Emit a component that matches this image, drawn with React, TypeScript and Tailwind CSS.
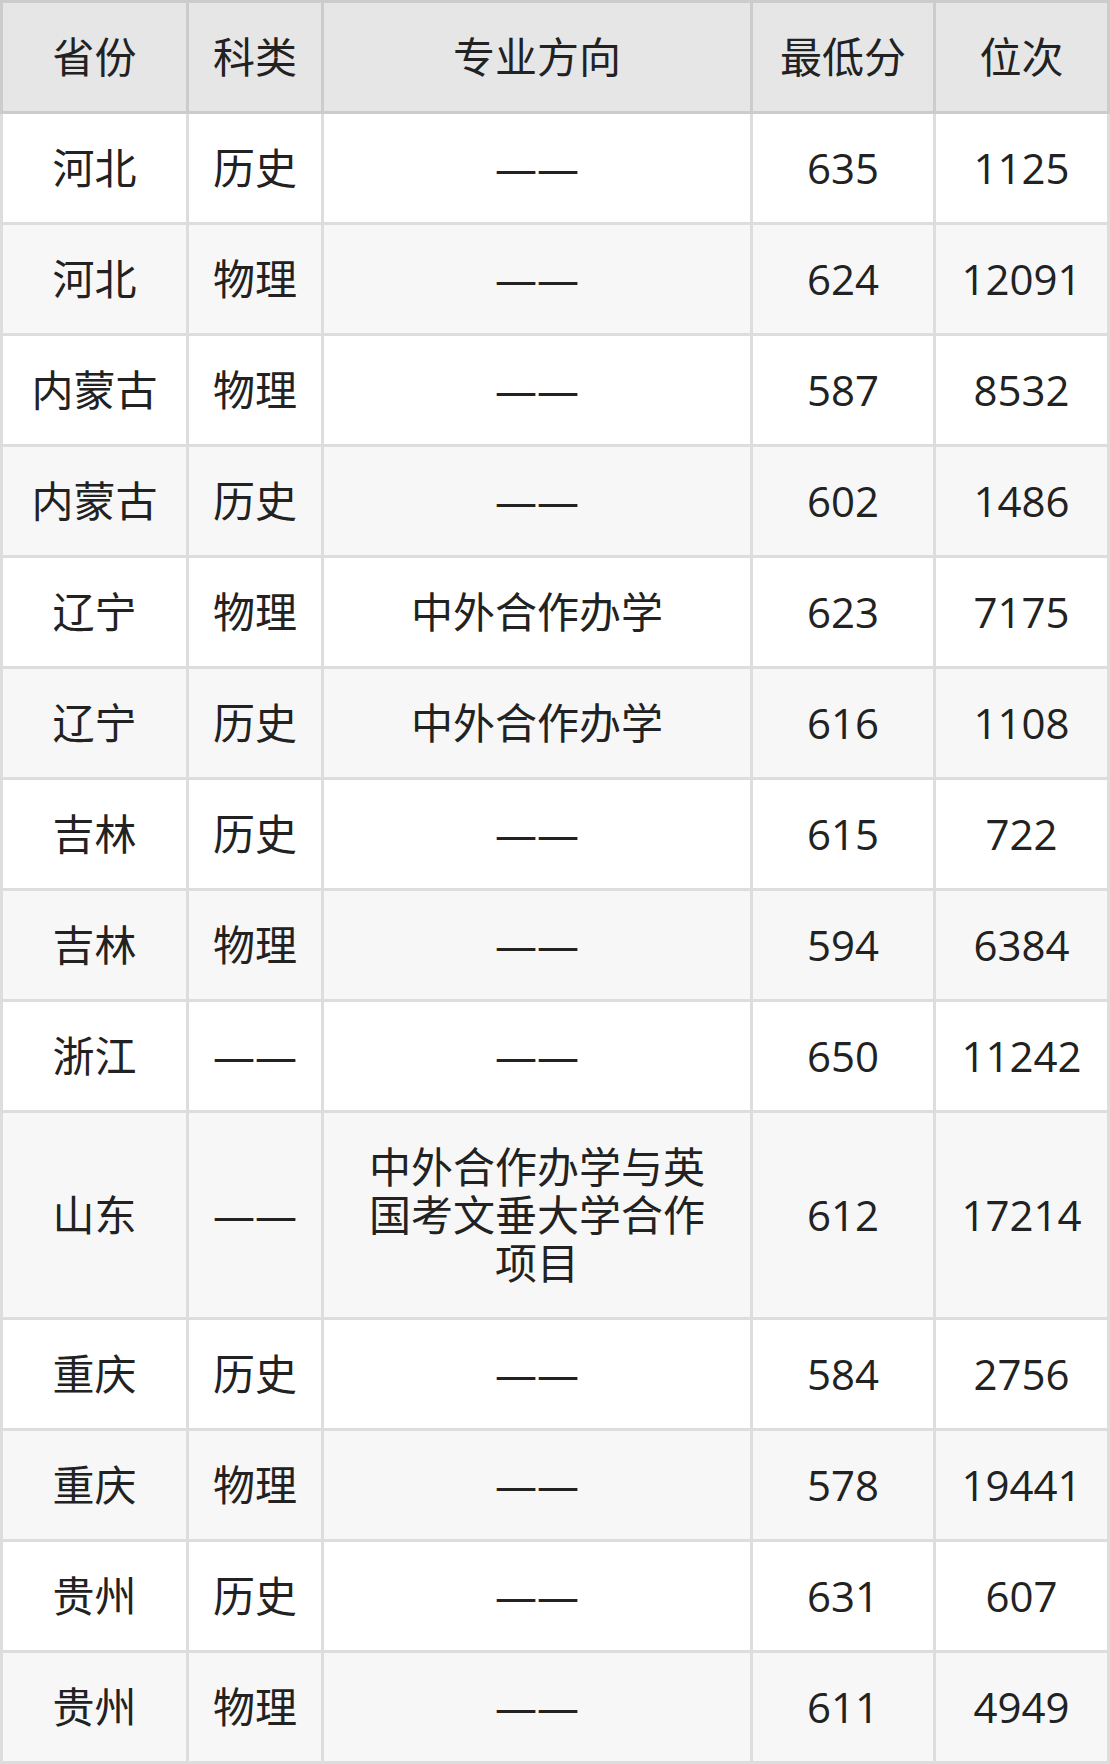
type Row = {
  province: string;
  subject: string;
  major: string;
  score: string;
  rank: string;
};

const rows: Row[] = [
  { province: "河北", subject: "历史", major: "——", score: "635", rank: "1125" },
  { province: "河北", subject: "物理", major: "——", score: "624", rank: "12091" },
  { province: "内蒙古", subject: "物理", major: "——", score: "587", rank: "8532" },
  { province: "内蒙古", subject: "历史", major: "——", score: "602", rank: "1486" },
  { province: "辽宁", subject: "物理", major: "中外合作办学", score: "623", rank: "7175" },
  { province: "辽宁", subject: "历史", major: "中外合作办学", score: "616", rank: "1108" },
  { province: "吉林", subject: "历史", major: "——", score: "615", rank: "722" },
  { province: "吉林", subject: "物理", major: "——", score: "594", rank: "6384" },
  { province: "浙江", subject: "——", major: "——", score: "650", rank: "11242" },
  {
    province: "山东",
    subject: "——",
    major: "中外合作办学与英国考文垂大学合作项目",
    score: "612",
    rank: "17214",
  },
  { province: "重庆", subject: "历史", major: "——", score: "584", rank: "2756" },
  { province: "重庆", subject: "物理", major: "——", score: "578", rank: "19441" },
  { province: "贵州", subject: "历史", major: "——", score: "631", rank: "607" },
  { province: "贵州", subject: "物理", major: "——", score: "611", rank: "4949" },
];

const headers = ["省份", "科类", "专业方向", "最低分", "位次"];

const gridCols = "grid grid-cols-[183px_132px_426px_180px_171px] gap-[3px]";

const App = () => {
  return (
    <div
      className="w-[1110px] bg-white text-[#222] text-[42px] leading-[48px]"
      style={{ fontFamily: '"Open Sans", "Noto Sans CJK SC", sans-serif' }}
    >
      {/* Header */}
      <div className={`${gridCols} bg-[#cccccc] p-[3px]`}>
        {headers.map((h) => (
          <div
            key={h}
            className="h-[108px] bg-[#e6e6e6] flex items-center justify-center text-center"
          >
            {h}
          </div>
        ))}
      </div>

      {/* Body */}
      <div className={`${gridCols} bg-[#dddddd] px-[3px] pb-[3px]`}>
        {rows.map((row, i) => {
          const bg = i % 2 === 0 ? "bg-white" : "bg-[#f7f7f7]";
          const tall = row.major.length > 10;
          const h = tall ? "h-[204px]" : "h-[108px]";
          const cells = [row.province, row.subject, row.major, row.score, row.rank];

          return cells.map((c, j) => (
            <div
              key={`${i}-${j}`}
              className={`${h} ${bg} flex items-center justify-center text-center ${
                j === 2 ? "px-[40px]" : ""
              }`}
            >
              {c}
            </div>
          ));
        })}
      </div>
    </div>
  );
};

export default App;
